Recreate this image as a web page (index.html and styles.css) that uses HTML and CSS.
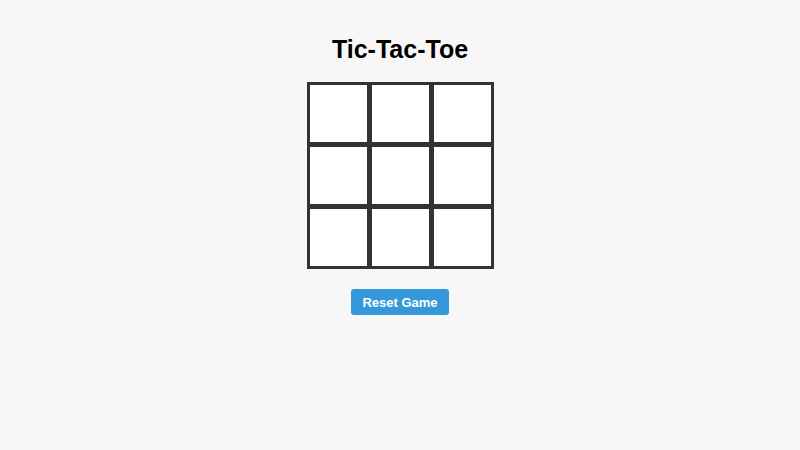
FILE: index.html
```html
<!DOCTYPE html>
<html lang="en">
<head>
    <meta charset="UTF-8">
    <meta name="viewport" content="width=device-width, initial-scale=1.0">
    <title>Tic-Tac-Toe</title>
    <link rel="stylesheet" href="styles.css">
</head>
<body>
    <div class="game">
        <h1>Tic-Tac-Toe</h1>
        <div class="board">
            <div class="cell"></div>
            <div class="cell"></div>
            <div class="cell"></div>
            <div class="cell"></div>
            <div class="cell"></div>
            <div class="cell"></div>
            <div class="cell"></div>
            <div class="cell"></div>
            <div class="cell"></div>
        </div>
        <button class="reset-btn">Reset Game</button>
    </div>
</body>
</html>
```

FILE: styles.css
```css
body {
    font-family: "Liberation Sans", Arial, sans-serif;
    background: #f7f7f7;
    margin: 0;
    padding: 20px;
}
.game {
    display: flex;
    flex-direction: column;
    align-items: center;
}
h1 {
    font-size: 25px;
    margin: 15px 0 18px;
    color: #000;
}
.board {
    display: grid;
    grid-template-columns: repeat(3, 57px);
    grid-template-rows: repeat(3, 57px);
    gap: 5px;
    padding: 3px;
    background: #333;
}
.cell {
    background: #fff;
}
.reset-btn {
    margin-top: 20px;
    background: #3498db;
    color: #fff;
    border: none;
    border-radius: 3px;
    width: 98px;
    height: 26px;
    font-family: inherit;
    font-size: 13px;
    font-weight: bold;
    cursor: pointer;
}
```
